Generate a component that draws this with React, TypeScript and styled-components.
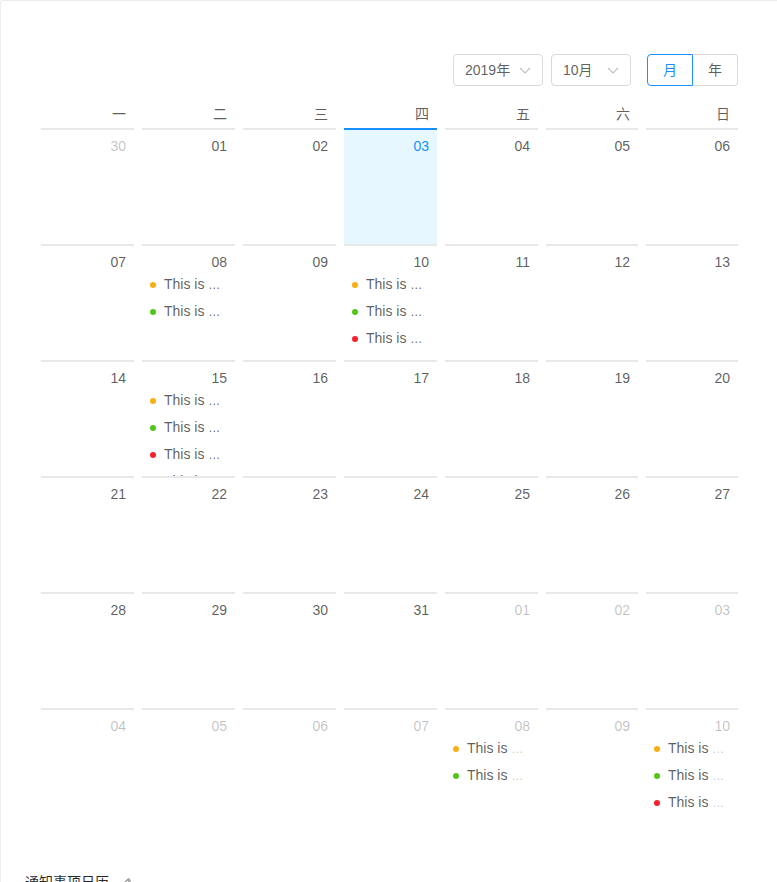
import React from "react";
import styled, { createGlobalStyle, css } from "styled-components";

const GlobalStyle = createGlobalStyle`
  html, body {
    margin: 0;
    padding: 0;
    overflow: hidden;
    background: #fff;
  }
  body {
    font-family: "Liberation Sans", "Noto Sans CJK SC", sans-serif;
    font-size: 14px;
    line-height: 1.5;
    color: rgba(0, 0, 0, 0.65);
  }
  * { box-sizing: border-box; }
`;

const CodeBox = styled.section`
  width: 779px;
  border: 1px solid #ebedf0;
  border-radius: 2px;
`;

const Demo = styled.div`
  padding: 42px 24px 50px;
`;

const Meta = styled.div`
  position: relative;
  height: 60px;
  border-top: 1px dashed #ebedf0;
`;

const MetaTitle = styled.div`
  position: absolute;
  top: -12px;
  left: 16px;
  padding: 1px 8px;
  background: #fff;
  font-size: 14px;
  line-height: 21px;
  color: rgba(0, 0, 0, 0.85);
  display: flex;
  align-items: center;
  gap: 10px;
`;

const EditIcon = styled.svg`
  width: 14px;
  height: 14px;
  color: rgba(0, 0, 0, 0.45);
`;

const Calendar = styled.div`
  width: 100%;
`;

const Header = styled.div`
  display: flex;
  justify-content: flex-end;
  align-items: center;
  padding: 11px 16px 11px 0;
`;

const Select = styled.div<{ $w: number }>`
  width: ${(p) => p.$w}px;
  height: 32px;
  margin-left: 8px;
  padding: 0 11px;
  border: 1px solid #d9d9d9;
  border-radius: 4px;
  display: flex;
  align-items: center;
  justify-content: space-between;
  font-size: 14px;
  color: rgba(0, 0, 0, 0.65);
`;

const Arrow = styled.svg`
  width: 12px;
  height: 12px;
  color: rgba(0, 0, 0, 0.25);
`;

const RadioGroup = styled.div`
  display: flex;
  margin-left: 16px;
`;

const RadioButton = styled.div<{ $active?: boolean; $first?: boolean }>`
  height: 32px;
  padding: 0 15px;
  line-height: 30px;
  font-size: 14px;
  border: 1px solid #d9d9d9;
  color: rgba(0, 0, 0, 0.65);
  ${(p) =>
    p.$first
      ? css`
          border-radius: 4px 0 0 4px;
        `
      : css`
          border-left: 0;
          border-radius: 0 4px 4px 0;
        `}
  ${(p) =>
    p.$active &&
    css`
      border-color: #1890ff;
      color: #1890ff;
    `}
`;

const Body = styled.div`
  padding: 8px 12px;
`;

const Grid = styled.div`
  display: grid;
  grid-template-columns: repeat(5, 101px) repeat(2, 100px);
`;

const WeekHead = styled.div`
  padding: 0 12px 5px 0;
  line-height: 18px;
  text-align: right;
  font-size: 14px;
  color: rgba(0, 0, 0, 0.65);
`;

const DayCell = styled.div<{ $other?: boolean; $selected?: boolean }>`
  min-width: 0;
  height: 116px;
  margin: 0 4px;
  padding: 4px 8px;
  border-top: 2px solid #e8e8e8;
  color: ${(p) => (p.$other ? "rgba(0, 0, 0, 0.25)" : "rgba(0, 0, 0, 0.65)")};
  ${(p) =>
    p.$selected &&
    css`
      background: #e6f7ff;
      border-top-color: #1890ff;
      color: #1890ff;
    `}
`;

const DayValue = styled.div`
  line-height: 24px;
  text-align: right;
`;

const DayContent = styled.div`
  height: 88px;
  overflow: hidden;
`;

const EventList = styled.ul`
  list-style: none;
  margin: 0;
  padding: 0;
`;

const EventItem = styled.li`
  height: 27px;
`;

const Badge = styled.span`
  display: block;
  width: 100%;
  overflow: hidden;
  white-space: nowrap;
  text-overflow: ellipsis;
  font-size: 12px;
  line-height: 21px;
`;

const Dot = styled.span<{ $color: string }>`
  display: inline-block;
  position: relative;
  top: -1px;
  width: 6px;
  height: 6px;
  border-radius: 50%;
  vertical-align: middle;
  background: ${(p) => p.$color};
`;

const BadgeText = styled.span`
  margin-left: 8px;
  font-size: 14px;
  color: rgba(0, 0, 0, 0.65);
`;

type EventType = "warning" | "success" | "error";
const colors: Record<EventType, string> = {
  warning: "#faad14",
  success: "#52c41a",
  error: "#f5222d",
};

function getList(d: number): { type: EventType; content: string }[] {
  switch (d) {
    case 8:
      return [
        { type: "warning", content: "This is warning event." },
        { type: "success", content: "This is usual event." },
      ];
    case 10:
      return [
        { type: "warning", content: "This is warning event." },
        { type: "success", content: "This is usual event." },
        { type: "error", content: "This is error event." },
      ];
    case 15:
      return [
        { type: "warning", content: "This is warning event" },
        { type: "success", content: "This is very long usual event。。...." },
        { type: "error", content: "This is error event 1." },
        { type: "error", content: "This is error event 2." },
        { type: "error", content: "This is error event 3." },
        { type: "error", content: "This is error event 4." },
      ];
    default:
      return [];
  }
}

const weekdays = ["一", "二", "三", "四", "五", "六", "日"];

type Day = { d: number; other: boolean };
const days: Day[] = [
  { d: 30, other: true },
  ...Array.from({ length: 31 }, (_, i) => ({ d: i + 1, other: false })),
  ...Array.from({ length: 10 }, (_, i) => ({ d: i + 1, other: true })),
];

const pad = (n: number) => (n < 10 ? `0${n}` : `${n}`);

export default function App() {
  return (
    <>
      <GlobalStyle />
      <CodeBox>
        <Demo>
          <Calendar>
            <Header>
              <Select $w={90}>
                <span>2019年</span>
                <Arrow viewBox="0 0 12 12">
                  <path d="M1 4 L6 9 L11 4" fill="none" stroke="currentColor" strokeWidth="1.1" />
                </Arrow>
              </Select>
              <Select $w={80}>
                <span>10月</span>
                <Arrow viewBox="0 0 12 12">
                  <path d="M1 4 L6 9 L11 4" fill="none" stroke="currentColor" strokeWidth="1.1" />
                </Arrow>
              </Select>
              <RadioGroup>
                <RadioButton $first $active>
                  月
                </RadioButton>
                <RadioButton>年</RadioButton>
              </RadioGroup>
            </Header>
            <Body>
              <Grid>
                {weekdays.map((w) => (
                  <WeekHead key={w}>{w}</WeekHead>
                ))}
                {days.map((day, i) => (
                  <DayCell key={i} $other={day.other} $selected={!day.other && day.d === 3}>
                    <DayValue>{pad(day.d)}</DayValue>
                    <DayContent>
                      <EventList>
                        {getList(day.d).map((ev, j) => (
                          <EventItem key={j}>
                            <Badge>
                              <Dot $color={colors[ev.type]} />
                              <BadgeText>{ev.content}</BadgeText>
                            </Badge>
                          </EventItem>
                        ))}
                      </EventList>
                    </DayContent>
                  </DayCell>
                ))}
              </Grid>
            </Body>
          </Calendar>
        </Demo>
        <Meta>
          <MetaTitle>
            <span>通知事项日历</span>
            <EditIcon viewBox="0 0 16 16">
              <path
                d="M3 13 L3.6 10.2 L10.8 3 L13 5.2 L5.8 12.4 Z M9.6 4.2 L11.8 6.4"
                fill="none"
                stroke="currentColor"
                strokeWidth="1.2"
                strokeLinejoin="round"
              />
            </EditIcon>
          </MetaTitle>
        </Meta>
      </CodeBox>
    </>
  );
}
